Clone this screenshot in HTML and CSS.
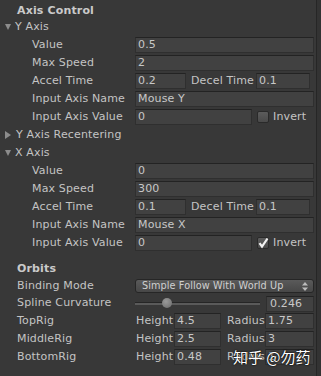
FILE: index.html
```html
<!DOCTYPE html>
<html lang="en">
<head>
<meta charset="UTF-8">
<meta name="viewport" content="width=device-width, initial-scale=1.0">
<title>Axis Control</title>
<link rel="stylesheet" href="styles.css">
</head>
<body>
<div class="window">
  <div class="inspector">
    <div class="hdr">Axis Control</div>

    <div class="row lvl0"><span class="arrow down"></span>Y Axis</div>
    <div class="row"><span class="lbl">Value</span><div class="field grow">0.5</div></div>
    <div class="row"><span class="lbl">Max Speed</span><div class="field grow">2</div></div>
    <div class="row">
      <span class="lbl">Accel Time</span><div class="field small">0.2</div>
      <span class="sublbl decel">Decel Time</span><div class="field decelf">0.1</div>
    </div>
    <div class="row"><span class="lbl">Input Axis Name</span><div class="field grow">Mouse Y</div></div>
    <div class="row">
      <span class="lbl">Input Axis Value</span><div class="field axval">0</div>
      <span class="check"></span><span class="checklbl">Invert</span>
    </div>

    <div class="row lvl0"><span class="arrow right"></span>Y Axis Recentering</div>

    <div class="row lvl0"><span class="arrow down"></span>X Axis</div>
    <div class="row"><span class="lbl">Value</span><div class="field grow">0</div></div>
    <div class="row"><span class="lbl">Max Speed</span><div class="field grow">300</div></div>
    <div class="row">
      <span class="lbl">Accel Time</span><div class="field small">0.1</div>
      <span class="sublbl decel">Decel Time</span><div class="field decelf">0.1</div>
    </div>
    <div class="row"><span class="lbl">Input Axis Name</span><div class="field grow">Mouse X</div></div>
    <div class="row">
      <span class="lbl">Input Axis Value</span><div class="field axval">0</div>
      <span class="check on">
        <svg width="12" height="12" viewBox="0 0 12 12"><path d="M2.5 6.2 L5 9.5 L10.5 1.5" fill="none" stroke="#f2f2f2" stroke-width="2.2"/></svg>
      </span><span class="checklbl">Invert</span>
    </div>

    <div class="hdr orbits">Orbits</div>
    <div class="row short">
      <span class="lbl flat">Binding Mode</span>
      <div class="popup">Simple Follow With World Up
        <svg class="updown" width="6" height="9" viewBox="0 0 6 9"><path d="M3 0 L6 3.5 H0 Z M3 9 L6 5.5 H0 Z" fill="#bcbcbc"/></svg>
      </div>
    </div>
    <div class="row">
      <span class="lbl flat">Spline Curvature</span>
      <div class="slider"><div class="track"></div><span class="thumb"></span></div>
      <div class="field numf">0.246</div>
    </div>
    <div class="row">
      <span class="lbl flat">TopRig</span>
      <span class="sublbl hgt">Height</span><div class="field rigf">4.5</div>
      <span class="sublbl rad">Radius</span><div class="field radf">1.75</div>
    </div>
    <div class="row">
      <span class="lbl flat">MiddleRig</span>
      <span class="sublbl hgt">Height</span><div class="field rigf">2.5</div>
      <span class="sublbl rad">Radius</span><div class="field radf">3</div>
    </div>
    <div class="row">
      <span class="lbl flat">BottomRig</span>
      <span class="sublbl hgt">Height</span><div class="field rigf">0.48</div>
      <span class="sublbl rad">Radius</span><div class="field radf">1</div>
    </div>
  </div>
  <div class="edge"></div>
  <div class="mark">知乎 @勿药</div>
</div>
</body>
</html>
```

FILE: styles.css
```css
body {
  margin: 0;
  background-color: #383838;
  font-family: "DejaVu Sans", Verdana, sans-serif;
  font-size: 11px;
  letter-spacing: 0.15px;
  color: #c4c4c4;
}
.window {
  position: relative;
  display: flex;
  height: 376px;
  overflow: hidden;
}
.inspector {
  width: 314px;
  padding-right: 2px;
}
.edge {
  width: 5px;
  border-left: 1px solid #262626;
  background-color: #333333;
}

.hdr {
  height: 15px;
  padding-top: 3px;
  padding-left: 17px;
  line-height: 15px;
  font-weight: bold;
  color: #cacaca;
}
.hdr.orbits {
  height: 18px;
  padding-top: 0;
  margin-top: 8px;
  line-height: 18px;
}

.row {
  display: flex;
  align-items: center;
  height: 18px;
  line-height: 18px;
  white-space: nowrap;
}
.row.short {
  height: 16px;
}
.row.lvl0 {
  padding-left: 5px;
}
.lbl {
  flex: none;
  width: 103px;
  padding-left: 32px;
}
.lbl.flat {
  padding-left: 17px;
  width: 118px;
}
.sublbl {
  flex: none;
}
.decel {
  margin-left: 5px;
  width: 65px;
}
.hgt {
  width: 38px;
  padding-left: 1px;
}
.rad {
  margin-left: 6px;
  width: 38px;
}

.arrow {
  width: 0;
  height: 0;
  margin-right: 4px;
  border-style: solid;
}
.arrow.down {
  border-width: 6px 3.5px 0 3.5px;
  border-color: #8c8c8c transparent transparent transparent;
}
.arrow.right {
  border-width: 4px 0 4px 6px;
  border-color: transparent transparent transparent #8c8c8c;
  margin-right: 5px;
}

.field {
  box-sizing: border-box;
  height: 16px;
  line-height: 14px;
  padding-left: 2px;
  background-color: #414141;
  border: 1px solid #2f2f2f;
  border-top-color: #232323;
  color: #c8c8c8;
  overflow: hidden;
}
.field.grow {
  flex: 1;
}
.field.small {
  width: 51px;
}
.field.decelf {
  width: 54px;
}
.field.axval {
  width: 117px;
}
.field.numf {
  width: 48px;
  margin-left: 6px;
  margin-top: 2px;
  padding-left: 3px;
}
.field.rigf {
  width: 47px;
}
.field.radf {
  width: 49px;
}

.check {
  box-sizing: border-box;
  width: 12px;
  height: 12px;
  margin-left: 5px;
  margin-right: 4px;
  border: 1px solid #2a2a2a;
  border-radius: 2px;
  background: linear-gradient(#5c5c5c, #4a4a4a);
  display: flex;
  align-items: center;
  justify-content: center;
}
.check svg {
  flex: none;
}

.popup {
  position: relative;
  box-sizing: border-box;
  flex: 1;
  height: 14px;
  line-height: 12px;
  margin-top: -1px;
  padding-left: 6px;
  font-size: 9.7px;
  letter-spacing: 0.1px;
  color: #d0d0d0;
  border: 1px solid #262626;
  border-radius: 3px;
  background: linear-gradient(#5a5a5a, #474747);
}
.updown {
  position: absolute;
  right: 5px;
  top: 2px;
}

.slider {
  position: relative;
  width: 125px;
  height: 18px;
}
.track {
  margin-top: 8px;
  height: 2px;
  background-color: #5a5a5a;
  border-top: 1px solid #262626;
}
.thumb {
  position: absolute;
  left: 27px;
  top: 4px;
  width: 10px;
  height: 10px;
  border-radius: 50%;
  background: radial-gradient(circle at 40% 35%, #9a9a9a, #6a6a6a);
}

.mark {
  position: absolute;
  left: 233px;
  top: 346px;
  font-family: "Noto Sans CJK SC", sans-serif;
  font-size: 15px;
  letter-spacing: 0;
  color: #ffffff;
  text-shadow: 0 0 2px #000, 0 0 1px #000;
}
```
